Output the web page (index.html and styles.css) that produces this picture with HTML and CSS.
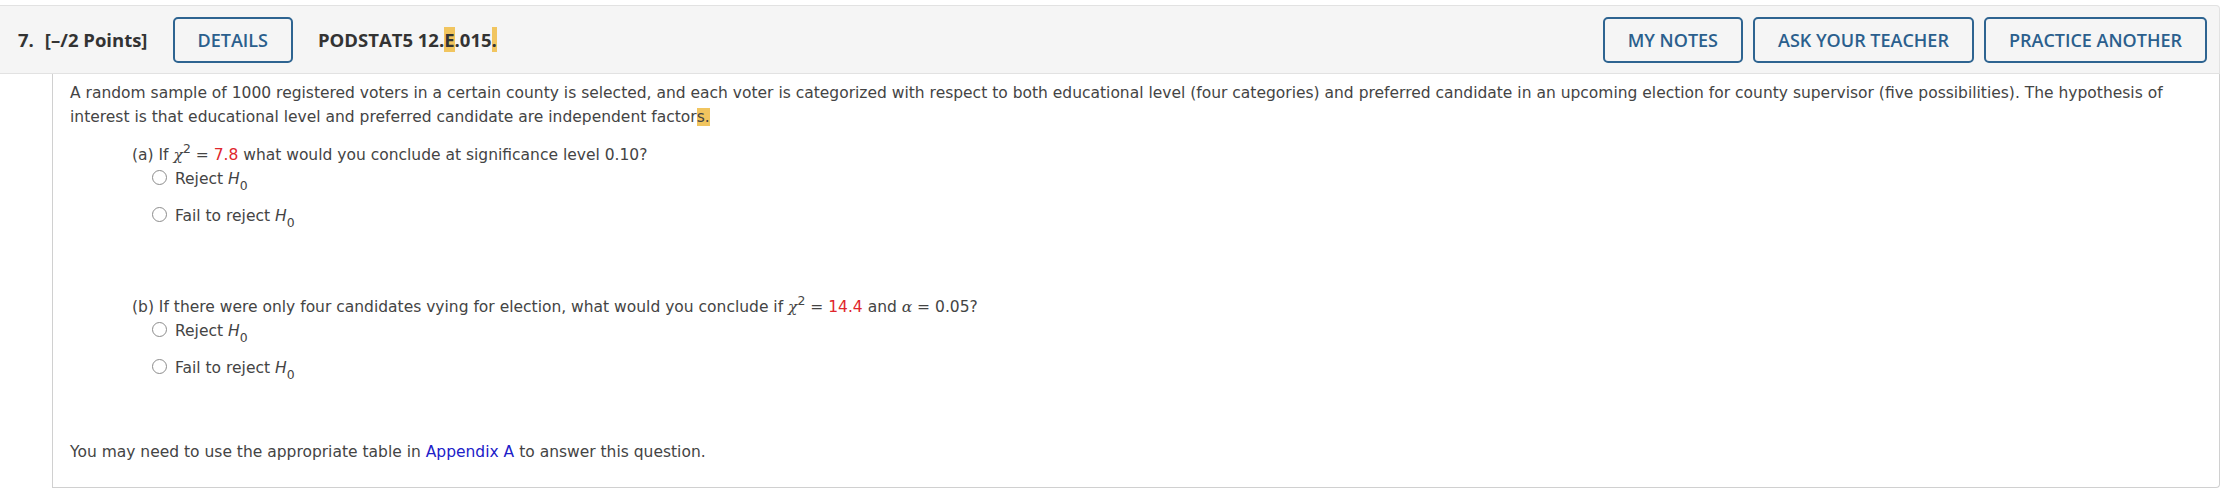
FILE: index.html
```html
<!DOCTYPE html>
<html lang="en">
<head>
    <meta charset="UTF-8">
    <title>Question 7</title>
    <link rel="stylesheet" href="styles.css">
</head>
<body>
    <div class="question">
        <div class="question-header">
            <span class="question-number">7.</span>
            <span class="question-points">[&ndash;/2 Points]</span>
            <button class="btn">DETAILS</button>
            <span class="question-code">PODSTAT5 12.<mark>E</mark>.015<mark>.</mark></span>
            <div class="question-actions">
                <button class="btn">MY NOTES</button>
                <button class="btn">ASK YOUR TEACHER</button>
                <button class="btn">PRACTICE ANOTHER</button>
            </div>
        </div>
        <div class="question-body">
            <p class="stem">A random sample of 1000 registered voters in a certain county is selected, and each voter is categorized with respect to both educational level (four categories) and preferred candidate in an upcoming election for county supervisor (five possibilities). The hypothesis of interest is that educational level and preferred candidate are independent factor<mark>s.</mark></p>

            <div class="part part-a">
                <div class="part-prompt">(a) If <i class="var">&chi;</i><sup>2</sup> = <span class="given">7.8</span> what would you conclude at significance level 0.10?</div>
                <label class="option"><span class="radio"></span>Reject <i>H</i><sub>0</sub></label>
                <label class="option"><span class="radio"></span>Fail to reject <i>H</i><sub>0</sub></label>
            </div>

            <div class="part part-b">
                <div class="part-prompt">(b) If there were only four candidates vying for election, what would you conclude if <i class="var">&chi;</i><sup>2</sup> = <span class="given">14.4</span> and <i class="var">&alpha;</i> = 0.05?</div>
                <label class="option"><span class="radio"></span>Reject <i>H</i><sub>0</sub></label>
                <label class="option"><span class="radio"></span>Fail to reject <i>H</i><sub>0</sub></label>
            </div>

            <p class="note">You may need to use the appropriate table in <a href="#">Appendix A</a> to answer this question.</p>
        </div>
    </div>
</body>
</html>
```

FILE: styles.css
```css
body {
    margin: 0;
    background-color: #fff;
}

.question {
    width: 2220px;
    margin-top: 5px;
}

.question-header {
    display: flex;
    align-items: center;
    height: 69px;
    box-sizing: border-box;
    padding: 0 12px 0 18px;
    background-color: #f5f5f5;
    border: 1px solid #e2e2e2;
    border-left: none;
    border-top-right-radius: 4px;
    font-family: "Open Sans", sans-serif;
    font-size: 18.5px;
    font-weight: 700;
    color: #333;
}

.question-number {
    margin-right: 11px;
}

.question-points {
    margin-right: 25px;
}

.question-code {
    margin-left: 25px;
}

mark {
    background-color: #f1c55f;
    color: inherit;
}

.question-actions {
    margin-left: auto;
    display: flex;
    gap: 10px;
}

.btn {
    height: 46px;
    padding: 0 23px;
    background-color: transparent;
    border: 2px solid #2e6491;
    border-radius: 5px;
    font-family: "Open Sans", sans-serif;
    font-size: 18px;
    font-weight: 600;
    color: #2b5f8d;
    cursor: pointer;
}

.question-body {
    margin-left: 52px;
    height: 414px;
    box-sizing: border-box;
    padding: 7px 17px 0 17px;
    border: 1px solid #d0d0d0;
    border-top: none;
    border-bottom-right-radius: 4px;
    font-family: "DejaVu Sans", Verdana, sans-serif;
    font-size: 15.5px;
    line-height: 24px;
    color: #444;
}

.stem {
    margin: 0;
}

.part {
    margin-left: 62px;
}

.part-a {
    margin-top: 14px;
}

.part-b {
    margin-top: 67px;
}

.option {
    display: block;
    margin-left: 20px;
}

.option + .option {
    margin-top: 13px;
}

.radio {
    display: inline-block;
    width: 13px;
    height: 13px;
    margin-right: 8px;
    border: 1px solid #8c8c8c;
    border-radius: 50%;
    vertical-align: -1px;
}

sub {
    font-size: 80%;
    line-height: 0;
    vertical-align: -6px;
}

sup {
    font-size: 80%;
    line-height: 0;
    vertical-align: 7px;
}

.var {
    font-family: "DejaVu Serif", serif;
}

.given {
    color: #e0262c;
}

.note {
    margin: 60px 0 0 0;
}

.note a {
    color: #2020c8;
    text-decoration: none;
}
```
